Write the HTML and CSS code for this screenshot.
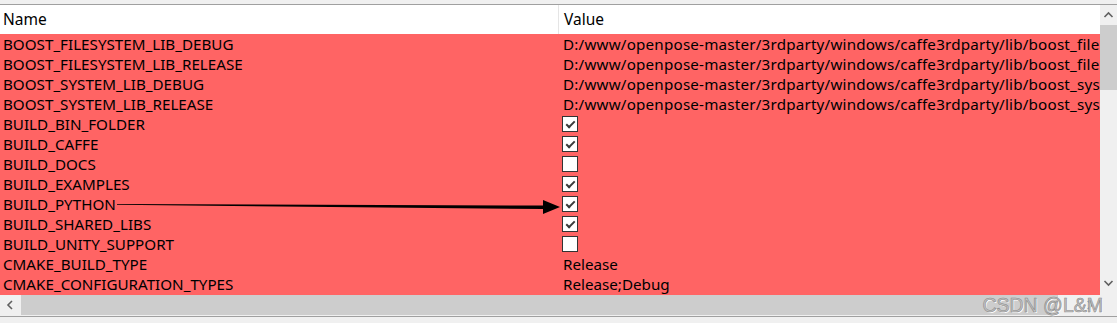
FILE: index.html
```html
<!DOCTYPE html>
<html>
<head>
<meta charset="utf-8">
<link rel="stylesheet" href="styles.css">
</head>
<body>
<div class="top"></div>
<div class="frame">
  <div class="table">
    <div class="head">
      <div class="cell name">Name</div>
      <div class="cell value">Value</div>
    </div>
    <div class="rows">
      <div class="row"><div class="cell name">BOOST_FILESYSTEM_LIB_DEBUG</div><div class="cell value path">D:/www/openpose-master/3rdparty/windows/caffe3rdparty/lib/boost_file</div></div>
      <div class="row"><div class="cell name">BOOST_FILESYSTEM_LIB_RELEASE</div><div class="cell value path">D:/www/openpose-master/3rdparty/windows/caffe3rdparty/lib/boost_file</div></div>
      <div class="row"><div class="cell name">BOOST_SYSTEM_LIB_DEBUG</div><div class="cell value path">D:/www/openpose-master/3rdparty/windows/caffe3rdparty/lib/boost_sys</div></div>
      <div class="row"><div class="cell name">BOOST_SYSTEM_LIB_RELEASE</div><div class="cell value path">D:/www/openpose-master/3rdparty/windows/caffe3rdparty/lib/boost_sys</div></div>
      <div class="row"><div class="cell name">BUILD_BIN_FOLDER</div><div class="cell value"><span class="cb on"></span></div></div>
      <div class="row"><div class="cell name">BUILD_CAFFE</div><div class="cell value"><span class="cb on"></span></div></div>
      <div class="row"><div class="cell name">BUILD_DOCS</div><div class="cell value"><span class="cb"></span></div></div>
      <div class="row"><div class="cell name">BUILD_EXAMPLES</div><div class="cell value"><span class="cb on"></span></div></div>
      <div class="row"><div class="cell name">BUILD_PYTHON</div><div class="cell value"><span class="cb on"></span></div></div>
      <div class="row"><div class="cell name">BUILD_SHARED_LIBS</div><div class="cell value"><span class="cb on"></span></div></div>
      <div class="row"><div class="cell name">BUILD_UNITY_SUPPORT</div><div class="cell value"><span class="cb"></span></div></div>
      <div class="row"><div class="cell name">CMAKE_BUILD_TYPE</div><div class="cell value">Release</div></div>
      <div class="row"><div class="cell name">CMAKE_CONFIGURATION_TYPES</div><div class="cell value">Release;Debug</div></div>
    </div>
    <svg class="arrow" width="460" height="20" viewBox="0 0 460 20">
      <polygon points="0,7 426,8.5 426,3 443,10 426,17 426,12 0,7.8" fill="#000"/>
    </svg>
  </div>
  <div class="vscroll">
    <div class="btn"><svg width="17" height="20" viewBox="0 0 17 20"><polyline points="4.5,12 8.5,8 12.5,12" fill="none" stroke="#606060" stroke-width="1.6"/></svg></div>
    <div class="vthumb"></div>
    <div class="vtrack"></div>
    <div class="btn"><svg width="17" height="20" viewBox="0 0 17 20"><polyline points="4.5,6 8.5,10 12.5,6" fill="none" stroke="#606060" stroke-width="1.6"/></svg></div>
  </div>
  <div class="hscroll">
    <div class="hbtn"><svg width="21" height="20" viewBox="0 0 21 20"><polyline points="12,6 8,10 12,14" fill="none" stroke="#606060" stroke-width="1.6"/></svg></div>
    <div class="hthumb"></div>
    <div class="htrack"></div>
    <div class="hbtn"><svg width="21" height="20" viewBox="0 0 21 20"><polyline points="9,6 13,10 9,14" fill="none" stroke="#606060" stroke-width="1.6"/></svg></div>
    <div class="watermark">CSDN @L&amp;M</div>
  </div>
  <div class="corner"></div>
</div>
<div class="bottom"></div>
</body>
</html>
```

FILE: styles.css
```css
html, body {
  margin: 0;
  padding: 0;
}
body {
  width: 1117px;
  height: 323px;
  overflow: hidden;
  background: #f0f0f0;
  font-family: "Noto Sans", "Open Sans", sans-serif;
  font-size: 15.2px;
  color: #000;
}
.top {
  height: 4px;
  border-bottom: 1px solid #a0a0a0;
}
.frame {
  display: grid;
  grid-template-columns: 1100px 17px;
  grid-template-rows: 290px 20px;
}
.table {
  position: relative;
  overflow: hidden;
  background: #fff;
}
.head {
  display: flex;
  height: 29px;
  background: #fff;
}
.head .cell {
  line-height: 29px;
  font-size: 15.5px;
}
.head .name {
  border-right: 1px solid #e5e5e5;
}
.rows {
  background: #ff6464;
  height: 261px;
}
.row {
  display: flex;
  height: 20px;
}
.cell {
  white-space: nowrap;
  overflow: hidden;
  line-height: 20px;
}
.cell.name {
  width: 555px;
  padding-left: 3px;
}
.cell.value {
  flex: 1;
  padding-left: 5px;
  display: flex;
  align-items: center;
}
.cell.path {
  letter-spacing: 0.2px;
}
.head .cell.value {
  padding-left: 5px;
}
.cb {
  box-sizing: border-box;
  width: 16px;
  height: 16px;
  margin-left: -1px;
  border: 1.5px solid #333;
  background: #fff;
  position: relative;
}
.cb.on::after {
  content: "";
  position: absolute;
  left: 3px;
  top: 1.5px;
  width: 7px;
  height: 3px;
  border-left: 2px solid #3a3a3a;
  border-bottom: 2px solid #3a3a3a;
  transform: translate(0, 2px) rotate(-45deg);
  transform-origin: center;
}
.arrow {
  position: absolute;
  left: 117px;
  top: 192px;
}
.vscroll {
  display: flex;
  flex-direction: column;
  background: #f0f0f0;
}
.btn {
  height: 20px;
  flex: none;
}
.btn svg, .hbtn svg {
  display: block;
}
.vthumb {
  height: 65px;
  background: #cdcdcd;
  flex: none;
}
.vtrack {
  flex: 1;
}
.hscroll {
  position: relative;
  display: flex;
  background: #f0f0f0;
}
.hbtn {
  width: 21px;
  flex: none;
}
.hthumb {
  width: 1037px;
  background: #cdcdcd;
  flex: none;
}
.htrack {
  flex: 1;
}
.corner {
  background: #f0f0f0;
}
.watermark {
  position: absolute;
  right: -3px;
  top: -1px;
  font-family: "Liberation Sans", Arial, sans-serif;
  font-size: 19.5px;
  line-height: 22px;
  color: #c4c4c4;
  -webkit-text-stroke: 0.6px #8a8a8a;
  text-shadow: 1px 1px 0 #fff;
}
.bottom {
  margin-top: 1px;
  border-top: 1px solid #a0a0a0;
  height: 6px;
}
```
